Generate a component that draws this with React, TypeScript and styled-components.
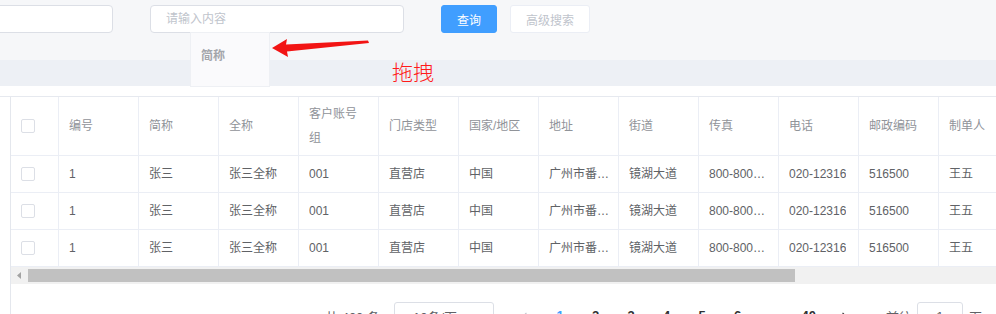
import React from "react";
import styled, { createGlobalStyle } from "styled-components";
import { ChevronDown, ChevronLeft, ChevronRight } from "lucide-react";

const GlobalStyle = createGlobalStyle`
  html, body {
    margin: 0;
    padding: 0;
    height: 314px;
    overflow: hidden;
    background: #fff;
  }
  body {
    font-family: "Liberation Sans", "Noto Sans CJK SC", sans-serif;
    font-size: 12px;
    color: #606266;
  }
  * { box-sizing: border-box; }
`;

const columns = [
  "编号",
  "简称",
  "全称",
  "客户账号组",
  "门店类型",
  "国家/地区",
  "地址",
  "街道",
  "传真",
  "电话",
  "邮政编码",
  "制单人",
  "备注",
];

const row = [
  "1",
  "张三",
  "张三全称",
  "001",
  "直营店",
  "中国",
  "广州市番禺区大石街道",
  "镜湖大道",
  "800-8008-8888",
  "020-12316",
  "516500",
  "王五",
  "",
];

const rows = [row, row, row];
const pages = ["1", "2", "3", "4", "5", "6", "···", "40"];

const App = () => {
  return (
    <Page>
      <GlobalStyle />
      <Toolbar>
        <Input $width={200} $shift={-87} />
        <Input $width={254} placeholder="请输入内容" />
        <ButtonGroup>
          <Button $primary>查询</Button>
          <Button>高级搜索</Button>
        </ButtonGroup>
      </Toolbar>
      <Band />
      <Spacer />
      <TableSection>
        <Panel>
          <Grid>
            <HeadCell>
              <Checkbox />
            </HeadCell>
            {columns.map((c) => (
              <HeadCell key={c}>
                <HeadText>{c}</HeadText>
              </HeadCell>
            ))}
            {rows.map((r, i) => (
              <React.Fragment key={i}>
                <BodyCell>
                  <Checkbox />
                </BodyCell>
                {r.map((v, j) => (
                  <BodyCell key={j}>
                    <CellText>{v}</CellText>
                  </BodyCell>
                ))}
              </React.Fragment>
            ))}
          </Grid>
          <ScrollTrack>
            <ScrollArrow>
              <svg width="5" height="7" viewBox="0 0 5 7">
                <polygon points="4,0 0,3.5 4,7" fill="#a3a3a3" />
              </svg>
            </ScrollArrow>
            <ScrollThumb />
          </ScrollTrack>
          <Pagination>
            <Total>共 400 条</Total>
            <Select>
              <span>10条/页</span>
              <ChevronDown size={13} color="#c0c4cc" />
            </Select>
            <PageButton $disabled>
              <ChevronLeft size={13} />
            </PageButton>
            {pages.map((p) => (
              <PageItem key={p} $active={p === "1"} $more={p === "···"}>
                {p}
              </PageItem>
            ))}
            <PageButton>
              <ChevronRight size={13} />
            </PageButton>
            <Jump>
              前往
              <JumpInput>1</JumpInput>
              页
            </Jump>
          </Pagination>
        </Panel>
      </TableSection>

      <Ghost>简称</Ghost>
      <Arrow width="110" height="24" viewBox="265 36 110 24">
        <polygon
          points="272,48 287,39 286,44.5 368,40.5 369,43 287,51.5 288,57"
          fill="#f21414"
        />
      </Arrow>
      <DragLabel>拖拽</DragLabel>
    </Page>
  );
};

const Page = styled.div`
  position: relative;
  width: 996px;
  height: 314px;
  overflow: hidden;
`;

const Toolbar = styled.div`
  height: 60px;
  background: #f6f7f9;
  padding-top: 5px;
  display: flex;
  align-items: flex-start;
  gap: 37px;
`;

const Input = styled.input<{ $width: number; $shift?: number }>`
  width: ${(p) => p.$width}px;
  margin-left: ${(p) => p.$shift || 0}px;
  height: 28px;
  border: 1px solid #dcdfe6;
  border-radius: 4px;
  background: #fff;
  padding: 0 15px;
  font-family: inherit;
  font-size: 12px;
  outline: none;
  &::placeholder {
    color: #c0c4cc;
  }
`;

const ButtonGroup = styled.div`
  display: flex;
  gap: 13px;
`;

const Button = styled.button<{ $primary?: boolean }>`
  height: 28px;
  padding: 0 15px;
  border-radius: 3px;
  font-family: inherit;
  font-size: 12px;
  border: 1px solid ${(p) => (p.$primary ? "#409eff" : "#ebeef5")};
  background: ${(p) => (p.$primary ? "#409eff" : "#fff")};
  color: ${(p) => (p.$primary ? "#fff" : "#c0c4cc")};
`;

const Band = styled.div`
  height: 26px;
  background: #edf0f5;
`;

const Spacer = styled.div`
  height: 10px;
`;

const TableSection = styled.div`
  border-top: 1px solid #e6e9ef;
`;

const Panel = styled.div`
  margin-left: 10px;
  border-left: 1px solid #e4e7ed;
  height: 240px;
  overflow: hidden;
`;

const Grid = styled.div`
  display: grid;
  grid-template-columns: 48px repeat(13, 80px);
  width: max-content;
`;

const Cell = styled.div`
  display: flex;
  align-items: center;
  padding: 0 8px 0 10px;
  border-right: 1px solid #ebeef5;
  border-bottom: 1px solid #ebeef5;
  min-width: 0;
`;

const HeadCell = styled(Cell)`
  height: 59px;
  padding-right: 10px;
  color: #909399;
`;

const BodyCell = styled(Cell)`
  height: 37px;
  color: #606266;
`;

const HeadText = styled.div`
  line-height: 24px;
  word-break: break-all;
`;

const CellText = styled.div`
  white-space: nowrap;
  overflow: hidden;
  text-overflow: ellipsis;
  line-height: 20px;
`;

const Checkbox = styled.span`
  display: inline-block;
  width: 14px;
  height: 14px;
  border: 1px solid #dcdfe6;
  border-radius: 2px;
  background: #fff;
`;

const ScrollTrack = styled.div`
  height: 17px;
  background: #f1f1f1;
  display: flex;
  align-items: center;
`;

const ScrollArrow = styled.div`
  width: 17px;
  height: 17px;
  display: flex;
  align-items: center;
  justify-content: center;
`;

const ScrollThumb = styled.div`
  width: 767px;
  height: 13px;
  background: #c1c1c1;
`;

const Pagination = styled.div`
  margin-top: 18px;
  display: flex;
  align-items: center;
  justify-content: flex-end;
  padding-right: 14px;
  height: 28px;
  font-size: 13px;
  color: #606266;
`;

const Total = styled.span`
  margin-right: 14px;
`;

const Select = styled.div`
  width: 100px;
  height: 28px;
  border: 1px solid #dcdfe6;
  border-radius: 3px;
  display: flex;
  align-items: center;
  justify-content: space-between;
  padding: 0 9px 0 18px;
  margin-right: 13px;
`;

const PageButton = styled.span<{ $disabled?: boolean }>`
  width: 35.5px;
  height: 28px;
  display: flex;
  align-items: center;
  justify-content: center;
  color: ${(p) => (p.$disabled ? "#c0c4cc" : "#303133")};
`;

const PageItem = styled.span<{ $active?: boolean; $more?: boolean }>`
  min-width: 35.5px;
  height: 28px;
  line-height: 28px;
  text-align: center;
  font-weight: 700;
  color: ${(p) => (p.$active ? "#409eff" : p.$more ? "#b4b7bc" : "#303133")};
`;

const Jump = styled.span`
  margin-left: 24px;
  display: flex;
  align-items: center;
  gap: 5px;
`;

const JumpInput = styled.span`
  width: 46px;
  height: 28px;
  border: 1px solid #dcdfe6;
  border-radius: 3px;
  display: flex;
  align-items: center;
  justify-content: center;
  margin-right: 1px;
`;

const Ghost = styled.div`
  position: absolute;
  left: 190px;
  top: 32px;
  width: 80px;
  height: 55px;
  background: #fafafc;
  border: 1px solid #eef0f4;
  padding: 14px 10px;
  line-height: 18px;
  font-size: 12px;
  font-weight: 700;
  color: #a3a6ab;
`;

const Arrow = styled.svg`
  position: absolute;
  left: 265px;
  top: 36px;
`;

const DragLabel = styled.div`
  position: absolute;
  left: 392px;
  top: 59px;
  font-family: "Noto Sans CJK SC", sans-serif;
  font-weight: 300;
  font-size: 21px;
  line-height: 24px;
  color: #ff1a1a;
`;

export default App;
